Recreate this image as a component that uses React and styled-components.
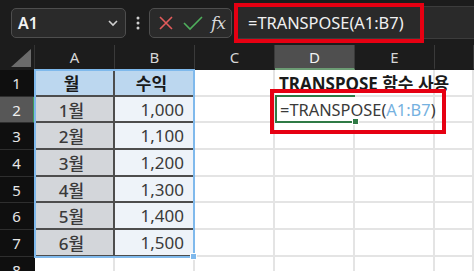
import React from "react";
import styled, { createGlobalStyle } from "styled-components";

const GlobalStyle = createGlobalStyle`
  html, body {
    margin: 0;
    padding: 0;
    background: #ffffff;
    overflow: hidden;
  }
  body {
    font-family: "Noto Sans", "Noto Sans CJK KR", sans-serif;
  }
`;

const Page = styled.div`
  position: relative;
  width: 474px;
  height: 271px;
  overflow: hidden;
  background: #ffffff;
`;

/* ---------- formula toolbar ---------- */

const Toolbar = styled.div`
  display: flex;
  align-items: center;
  height: 45px;
  padding-left: 11px;
  background: #1c1c1c;
  box-sizing: border-box;
`;

const NameBox = styled.div`
  display: flex;
  align-items: center;
  justify-content: space-between;
  width: 115px;
  height: 30px;
  box-sizing: border-box;
  padding: 0 6px 0 6px;
  border: 1px solid #4e4e4e;
  border-radius: 5px;
  background: #2a2a2a;
  color: #f2f2f2;
  font-size: 16px;
  font-weight: 600;
`;

const Dots = styled.div`
  width: 23px;
  display: flex;
  justify-content: center;
`;

const ButtonGroup = styled.div`
  display: flex;
  align-items: center;
  justify-content: space-between;
  width: 83px;
  height: 30px;
  box-sizing: border-box;
  padding: 0 6px 0 8px;
  border: 1px solid #4e4e4e;
  border-radius: 5px;
  background: #2a2a2a;
`;

const Fx = styled.span`
  font-family: "DejaVu Serif", "Liberation Serif", serif;
  font-style: italic;
  font-size: 17px;
  color: #d8d8d8;
  letter-spacing: -1px;
`;

const FormulaBar = styled.div`
  flex: 1;
  display: flex;
  align-items: center;
  height: 31px;
  margin-left: 6px;
  padding-left: 10px;
  background: #2a2a2a;
  border-top: 1px solid #3c3c3c;
  border-bottom: 1px solid #3c3c3c;
  color: #f0f0f0;
  font-size: 16.4px;
  white-space: nowrap;
`;

/* ---------- sheet grid ---------- */

const SheetWrap = styled.div`
  position: relative;
`;

const Sheet = styled.div`
  display: grid;
  grid-template-columns: 35px repeat(5, 80px) 1fr;
  grid-template-rows: 25px repeat(8, 26.7px);
`;

const OverlayGrid = styled(Sheet)`
  position: absolute;
  inset: 0;
  pointer-events: none;
  z-index: 3;
`;

const Corner = styled.div`
  background: #1c1c1c;
  display: flex;
  align-items: flex-end;
  justify-content: flex-end;
  padding: 0 3px 3px 0;
  border-right: 1px solid #333;
`;

const ColHead = styled.div`
  display: flex;
  align-items: center;
  justify-content: center;
  background: ${({ $active }) => ($active ? "#4f4f4f" : "#1c1c1c")};
  border-right: 1px solid #3a3a3a;
  border-bottom: 2px solid ${({ $active }) => ($active ? "#6c9c74" : "#1c1c1c")};
  color: ${({ $active }) => ($active ? "#f4f4f4" : "#d6d6d6")};
  font-size: 15px;
`;

const RowHead = styled.div`
  display: flex;
  align-items: center;
  justify-content: center;
  background: ${({ $active }) => ($active ? "#575757" : "#0f0f0f")};
  border-bottom: 1px solid #2e2e2e;
  border-right: 2px solid ${({ $active }) => ($active ? "#3f9a57" : "#0f0f0f")};
  color: ${({ $active }) => ($active ? "#f0f0f0" : "#e6e6e6")};
  font-size: 15px;
`;

const Cell = styled.div`
  display: flex;
  align-items: center;
  justify-content: ${({ $align }) =>
    $align === "right" ? "flex-end" : $align === "center" ? "center" : "flex-start"};
  padding: 0 9px 0 ${({ $pad }) => $pad ?? 4}px;
  box-sizing: border-box;
  min-width: 0;
  overflow: visible;
  white-space: nowrap;
  background: ${({ $bg }) => $bg || "transparent"};
  border-bottom: 2px solid ${({ $dark }) => ($dark ? "#4d4d4d" : "#e4e4e4")};
  border-right: ${({ $noRight, $dark }) =>
    $noRight ? "none" : `2px solid ${$dark ? "#4d4d4d" : "#e4e4e4"}`};
  color: ${({ $bold }) => ($bold ? "#1a1a1a" : "#3a3a3a")};
  font-weight: ${({ $bold, $semi }) => ($bold ? 700 : $semi ? 500 : 400)};
  font-size: ${({ $size }) => $size || 17}px;
  grid-column: ${({ $span }) => ($span ? `span ${$span}` : "auto")};
  position: relative;
  z-index: ${({ $front }) => ($front ? 2 : 0)};
`;

const Selection = styled.div`
  grid-column: 2 / 4;
  grid-row: 2 / 9;
  border: 2px solid #7fb9ec;
  margin: -1px 0 -1px -1px;
  position: relative;
`;

const EditFrame = styled.div`
  grid-column: 5 / 6;
  grid-row: 3 / 4;
  border: 2px solid #2f7a45;
  border-right: none;
  margin: -2px 0 0 0;
  position: relative;
`;

const Handle = styled.span`
  position: absolute;
  right: -4px;
  bottom: -4px;
  width: 5px;
  height: 5px;
  background: ${({ $color }) => $color};
  border: 1px solid #fff;
`;

const RefText = styled.span`
  color: #75b1e0;
`;

const Caret = styled.span`
  display: inline-block;
  width: 1px;
  height: 18px;
  margin-left: 1px;
  background: #9a9a9a;
`;

/* ---------- annotation boxes ---------- */

const RedBox = styled.div`
  position: absolute;
  left: ${({ $x }) => $x}px;
  top: ${({ $y }) => $y}px;
  width: ${({ $w }) => $w}px;
  height: ${({ $h }) => $h}px;
  border: 4px solid #e60012;
  box-sizing: border-box;
  pointer-events: none;
  z-index: 5;
`;

const months = ["1월", "2월", "3월", "4월", "5월", "6월"];
const profits = ["1,000", "1,100", "1,200", "1,300", "1,400", "1,500"];
const columns = ["A", "B", "C", "D", "E", ""];

export default function App() {
  return (
    <Page>
      <GlobalStyle />
      <Toolbar>
        <NameBox>
          A1
          <svg width="12" height="8" viewBox="0 0 12 8">
            <path d="M2 2 L6 6 L10 2" fill="none" stroke="#cfcfcf" strokeWidth="1.6" />
          </svg>
        </NameBox>
        <Dots>
          <svg width="4" height="14" viewBox="0 0 4 14">
            <circle cx="2" cy="2" r="1.5" fill="#cfcfcf" />
            <circle cx="2" cy="7" r="1.5" fill="#cfcfcf" />
            <circle cx="2" cy="12" r="1.5" fill="#cfcfcf" />
          </svg>
        </Dots>
        <ButtonGroup>
          <svg width="16" height="16" viewBox="0 0 16 16">
            <path d="M2 2 L14 14 M14 2 L2 14" stroke="#e35b5b" strokeWidth="1.6" />
          </svg>
          <svg width="20" height="16" viewBox="0 0 20 16">
            <path d="M1 8 L7 14 L19 2" fill="none" stroke="#4fae5c" strokeWidth="1.6" />
          </svg>
          <Fx>fx</Fx>
        </ButtonGroup>
        <FormulaBar>=TRANSPOSE(A1:B7)</FormulaBar>
      </Toolbar>

      <SheetWrap>
        <Sheet>
          <Corner>
            <svg width="20" height="18" viewBox="0 0 20 18">
              <path d="M20 0 L20 18 L0 18 Z" fill="#6b6b6b" />
            </svg>
          </Corner>
          {columns.map((c, i) => (
            <ColHead key={i} $active={c === "D"}>
              {c}
            </ColHead>
          ))}

          <RowHead>1</RowHead>
          <Cell $bg="#bcd7ef" $align="center" $bold $dark>
            월
          </Cell>
          <Cell $bg="#bcd7ef" $align="center" $bold $dark>
            수익
          </Cell>
          <Cell />
          <Cell $span={2} $bold $front>
            TRANSPOSE 함수 사용
          </Cell>
          <Cell />

          {months.map((m, i) => (
            <React.Fragment key={m}>
              <RowHead $active={i === 0}>{i + 2}</RowHead>
              <Cell $bg="#d3d6da" $align="center" $semi $dark>
                {m}
              </Cell>
              <Cell $bg="#eef3f9" $align="right" $dark>
                {profits[i]}
              </Cell>
              <Cell />
              {i === 0 ? (
                <Cell $noRight $front $pad={5} $size={16.4}>
                  =TRANSPOSE(<RefText>A1:B7</RefText>)<Caret />
                </Cell>
              ) : (
                <Cell />
              )}
              <Cell />
              <Cell />
            </React.Fragment>
          ))}

          <RowHead>8</RowHead>
          <Cell />
          <Cell />
          <Cell />
          <Cell />
          <Cell />
          <Cell />
        </Sheet>

        <OverlayGrid>
          <Selection>
            <Handle $color="#7fb9ec" />
          </Selection>
          <EditFrame>
            <Handle $color="#2f7a45" />
          </EditFrame>
        </OverlayGrid>
      </SheetWrap>

      <RedBox $x={234} $y={3} $w={190} $h={40} />
      <RedBox $x={270} $y={89} $w={176} $h={45} />
    </Page>
  );
}
